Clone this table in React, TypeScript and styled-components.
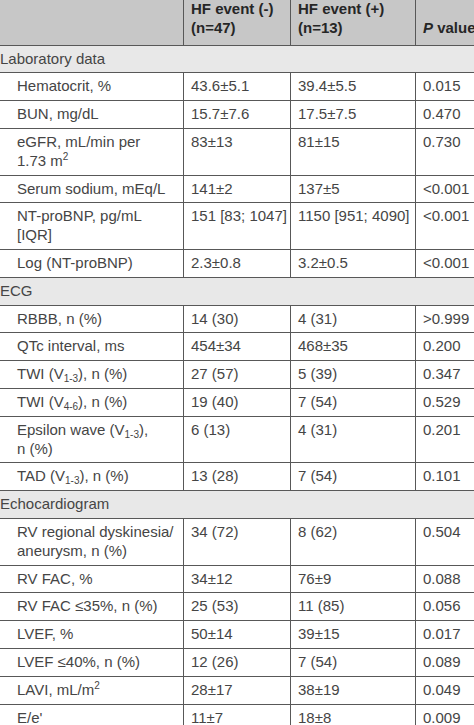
import React from 'react'
import styled, { createGlobalStyle } from 'styled-components'

const GlobalStyle = createGlobalStyle`
    html, body {
        margin: 0;
        padding: 0;
        background: #fff;
        overflow: hidden;
    }
    body {
        font-family: "Liberation Sans", Arial, sans-serif;
    }
`

const Frame = styled.div`
    width: 474px;
    height: 725px;
    overflow: hidden;
`

const Table = styled.table`
    border-collapse: collapse;
    table-layout: fixed;
    width: 498px;
    margin-left: -8px;
    font-size: 15px;
    line-height: 18.8px;
    color: #454545;
`

const HeadRow = styled.tr`
    height: 45px;
`

const HeadCell = styled.th`
    background: #c7c7c7;
    color: #262626;
    font-weight: 700;
    text-align: left;
    vertical-align: bottom;
    padding: 0 7px 7px;
    border: 1px solid #585858;
    border-top: 0;
    white-space: nowrap;
`

const SectionCell = styled.td`
    background: #e8e8e8;
    padding: 4px 7px;
    border: 1px solid #585858;
    white-space: nowrap;
`

const Cell = styled.td<{ $label?: boolean }>`
    padding: 4px 7px 4px ${(p) => (p.$label ? '24px' : '7px')};
    border: 1px solid #585858;
    vertical-align: top;
    white-space: nowrap;
`

const Sub = styled.sub`
    font-size: 10px;
    line-height: 0;
    vertical-align: -3px;
`

const Sup = styled.sup`
    font-size: 10px;
    line-height: 0;
    vertical-align: 6px;
`

type Row = { label: React.ReactNode; neg: string; pos: string; p: string }
type Section = { title: string; rows: Row[] }

const sections: Section[] = [
    {
        title: 'Laboratory data',
        rows: [
            { label: 'Hematocrit, %', neg: '43.6±5.1', pos: '39.4±5.5', p: '0.015' },
            { label: 'BUN, mg/dL', neg: '15.7±7.6', pos: '17.5±7.5', p: '0.470' },
            {
                label: (
                    <>
                        eGFR, mL/min per
                        <br />
                        1.73 m<Sup>2</Sup>
                    </>
                ),
                neg: '83±13',
                pos: '81±15',
                p: '0.730',
            },
            { label: 'Serum sodium, mEq/L', neg: '141±2', pos: '137±5', p: '<0.001' },
            {
                label: (
                    <>
                        NT-proBNP, pg/mL
                        <br />
                        [IQR]
                    </>
                ),
                neg: '151 [83; 1047]',
                pos: '1150 [951; 4090]',
                p: '<0.001',
            },
            { label: 'Log (NT-proBNP)', neg: '2.3±0.8', pos: '3.2±0.5', p: '<0.001' },
        ],
    },
    {
        title: 'ECG',
        rows: [
            { label: 'RBBB, n (%)', neg: '14 (30)', pos: '4 (31)', p: '>0.999' },
            { label: 'QTc interval, ms', neg: '454±34', pos: '468±35', p: '0.200' },
            {
                label: (
                    <>
                        TWI (V<Sub>1-3</Sub>), n (%)
                    </>
                ),
                neg: '27 (57)',
                pos: '5 (39)',
                p: '0.347',
            },
            {
                label: (
                    <>
                        TWI (V<Sub>4-6</Sub>), n (%)
                    </>
                ),
                neg: '19 (40)',
                pos: '7 (54)',
                p: '0.529',
            },
            {
                label: (
                    <>
                        Epsilon wave (V<Sub>1-3</Sub>),
                        <br />
                        n (%)
                    </>
                ),
                neg: '6 (13)',
                pos: '4 (31)',
                p: '0.201',
            },
            {
                label: (
                    <>
                        TAD (V<Sub>1-3</Sub>), n (%)
                    </>
                ),
                neg: '13 (28)',
                pos: '7 (54)',
                p: '0.101',
            },
        ],
    },
    {
        title: 'Echocardiogram',
        rows: [
            {
                label: (
                    <>
                        RV regional dyskinesia/
                        <br />
                        aneurysm, n (%)
                    </>
                ),
                neg: '34 (72)',
                pos: '8 (62)',
                p: '0.504',
            },
            { label: 'RV FAC, %', neg: '34±12', pos: '76±9', p: '0.088' },
            { label: 'RV FAC ≤35%, n (%)', neg: '25 (53)', pos: '11 (85)', p: '0.056' },
            { label: 'LVEF, %', neg: '50±14', pos: '39±15', p: '0.017' },
            { label: 'LVEF ≤40%, n (%)', neg: '12 (26)', pos: '7 (54)', p: '0.089' },
            {
                label: (
                    <>
                        LAVI, mL/m<Sup>2</Sup>
                    </>
                ),
                neg: '28±17',
                pos: '38±19',
                p: '0.049',
            },
            { label: "E/e'", neg: '11±7', pos: '18±8', p: '0.009' },
        ],
    },
]

export default function App() {
    return (
        <Frame>
            <GlobalStyle />
            <Table>
                <colgroup>
                    <col style={{ width: 191 }} />
                    <col style={{ width: 107 }} />
                    <col style={{ width: 125 }} />
                    <col style={{ width: 75 }} />
                </colgroup>
                <thead>
                    <HeadRow>
                        <HeadCell />
                        <HeadCell>
                            HF event (-)
                            <br />
                            (n=47)
                        </HeadCell>
                        <HeadCell>
                            HF event (+)
                            <br />
                            (n=13)
                        </HeadCell>
                        <HeadCell>
                            <i>P</i> value
                        </HeadCell>
                    </HeadRow>
                </thead>
                <tbody>
                    {sections.map((s) => (
                        <React.Fragment key={s.title}>
                            <tr>
                                <SectionCell colSpan={4}>{s.title}</SectionCell>
                            </tr>
                            {s.rows.map((r, i) => (
                                <tr key={i}>
                                    <Cell $label>{r.label}</Cell>
                                    <Cell>{r.neg}</Cell>
                                    <Cell>{r.pos}</Cell>
                                    <Cell>{r.p}</Cell>
                                </tr>
                            ))}
                        </React.Fragment>
                    ))}
                </tbody>
            </Table>
        </Frame>
    )
}
